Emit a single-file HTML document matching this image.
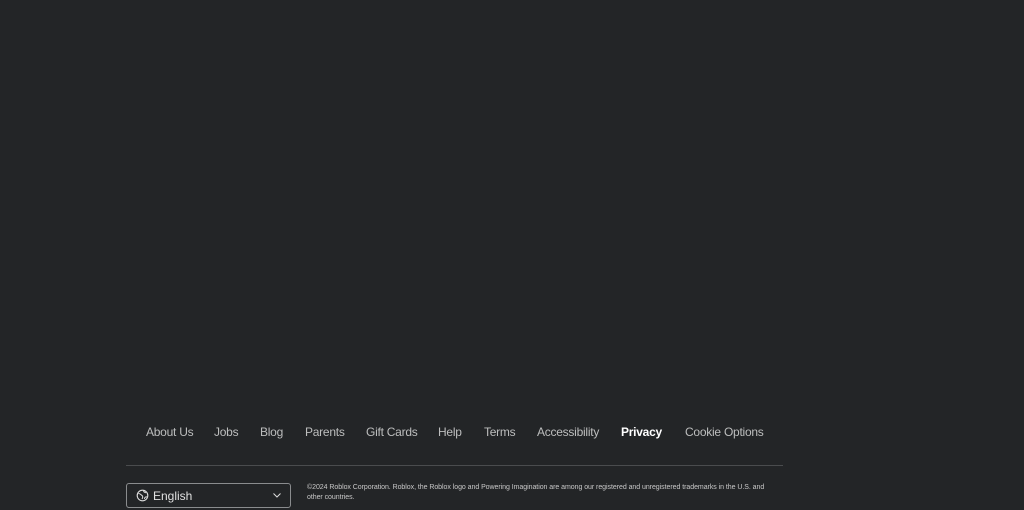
<!DOCTYPE html>
<html><head><style>
html,body{margin:0;padding:0;width:1024px;height:510px;background:#232527;overflow:hidden;font-family:"Liberation Sans",sans-serif}
.l{position:absolute;top:425px;font-size:12px;letter-spacing:-0.25px;color:#bdbebe;white-space:nowrap;line-height:15px}
.b{color:#fff;font-weight:bold}
.line{position:absolute;left:126px;top:465px;width:657px;height:1px;background:#4a4c4e}
.dd{position:absolute;left:126px;top:483px;width:165px;height:25px;border:1px solid #8a8c8e;border-radius:3px;box-sizing:border-box}
.dd span{position:absolute;left:26px;top:5px;font-size:12px;color:#e0e0e0}
.c{position:absolute;left:307px;top:483px;font-size:7px;color:#c8c8c8;line-height:10px;width:466px;letter-spacing:-0.05px}
</style></head><body>
<div class="l" style="left:146px">About Us</div>
<div class="l" style="left:214px">Jobs</div>
<div class="l" style="left:260px">Blog</div>
<div class="l" style="left:305px">Parents</div>
<div class="l" style="left:366px">Gift Cards</div>
<div class="l" style="left:438px">Help</div>
<div class="l" style="left:484px">Terms</div>
<div class="l" style="left:537px">Accessibility</div>
<div class="l b" style="left:621px">Privacy</div>
<div class="l" style="left:685px">Cookie Options</div>
<div class="line"></div>
<div class="dd">
<svg style="position:absolute;left:9px;top:5px" width="13" height="13" viewBox="0 0 13 13"><circle cx="6.5" cy="6.5" r="5.3" fill="none" stroke="#ddd" stroke-width="1.1"/><path d="M2.5 4.5c2 0 2.5 1.5 3.5 2s1 2 0 3.5M7.5 1.5c0 1.5 1 2 2.5 2.2M11 8c-1.5-.5-2.5.5-2.5 2" fill="none" stroke="#ddd" stroke-width="1"/></svg>
<span>English</span>
<svg style="position:absolute;left:146px;top:9px" width="8" height="5" viewBox="0 0 8 5"><path d="M.5.5L4 4 7.5.5" fill="none" stroke="#ddd" stroke-width="1"/></svg>
</div>
<div class="c">©2024 Roblox Corporation. Roblox, the Roblox logo and Powering Imagination are among our registered and unregistered trademarks in the U.S. and other countries.</div>
</body></html>
